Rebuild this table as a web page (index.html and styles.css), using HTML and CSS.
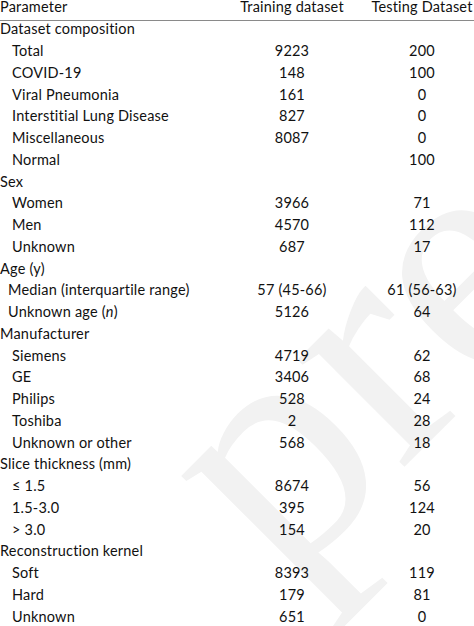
FILE: index.html
```html
<!DOCTYPE html>
<html>
<head>
<meta charset="utf-8">
<link rel="stylesheet" href="styles.css">
</head>
<body>
<div class="page">
  <div class="watermark" aria-hidden="true">preprint</div>
  <div class="table">
    <div class="row head"><span class="lbl top">Parameter</span><span class="num">Training dataset</span><span class="num">Testing Dataset</span></div>
    <div class="body">
      <div class="row"><span class="lbl top">Dataset composition</span><span class="num"></span><span class="num"></span></div>
      <div class="row"><span class="lbl">Total</span><span class="num">9223</span><span class="num">200</span></div>
      <div class="row"><span class="lbl">COVID-19</span><span class="num">148</span><span class="num">100</span></div>
      <div class="row"><span class="lbl">Viral Pneumonia</span><span class="num">161</span><span class="num">0</span></div>
      <div class="row"><span class="lbl">Interstitial Lung Disease</span><span class="num">827</span><span class="num">0</span></div>
      <div class="row"><span class="lbl">Miscellaneous</span><span class="num">8087</span><span class="num">0</span></div>
      <div class="row"><span class="lbl">Normal</span><span class="num"></span><span class="num">100</span></div>
      <div class="row"><span class="lbl top">Sex</span><span class="num"></span><span class="num"></span></div>
      <div class="row"><span class="lbl">Women</span><span class="num">3966</span><span class="num">71</span></div>
      <div class="row"><span class="lbl">Men</span><span class="num">4570</span><span class="num">112</span></div>
      <div class="row"><span class="lbl">Unknown</span><span class="num">687</span><span class="num">17</span></div>
      <div class="row"><span class="lbl top">Age (y)</span><span class="num"></span><span class="num"></span></div>
      <div class="row"><span class="lbl narrow">Median (interquartile range)</span><span class="num">57 (45-66)</span><span class="num">61 (56-63)</span></div>
      <div class="row"><span class="lbl narrow">Unknown age (<i>n</i>)</span><span class="num">5126</span><span class="num">64</span></div>
      <div class="row"><span class="lbl top">Manufacturer</span><span class="num"></span><span class="num"></span></div>
      <div class="row"><span class="lbl">Siemens</span><span class="num">4719</span><span class="num">62</span></div>
      <div class="row"><span class="lbl">GE</span><span class="num">3406</span><span class="num">68</span></div>
      <div class="row"><span class="lbl">Philips</span><span class="num">528</span><span class="num">24</span></div>
      <div class="row"><span class="lbl">Toshiba</span><span class="num">2</span><span class="num">28</span></div>
      <div class="row"><span class="lbl">Unknown or other</span><span class="num">568</span><span class="num">18</span></div>
      <div class="row"><span class="lbl top">Slice thickness (mm)</span><span class="num"></span><span class="num"></span></div>
      <div class="row"><span class="lbl">≤ 1.5</span><span class="num">8674</span><span class="num">56</span></div>
      <div class="row"><span class="lbl">1.5-3.0</span><span class="num">395</span><span class="num">124</span></div>
      <div class="row"><span class="lbl">&gt; 3.0</span><span class="num">154</span><span class="num">20</span></div>
      <div class="row"><span class="lbl top">Reconstruction kernel</span><span class="num"></span><span class="num"></span></div>
      <div class="row"><span class="lbl">Soft</span><span class="num">8393</span><span class="num">119</span></div>
      <div class="row"><span class="lbl">Hard</span><span class="num">179</span><span class="num">81</span></div>
      <div class="row"><span class="lbl">Unknown</span><span class="num">651</span><span class="num">0</span></div>
    </div>
  </div>
</div>
</body>
</html>
```
FILE: styles.css
```css
html, body {
  margin: 0;
  padding: 0;
  background: #fff;
  overflow: hidden;
}
.page {
  position: relative;
  width: 474px;
  height: 626px;
  overflow: hidden;
  font-family: Lato, "Liberation Sans", sans-serif;
  font-size: 14.5px;
  letter-spacing: 0.2px;
  color: #111;
}
.watermark {
  position: absolute;
  left: 284px;
  top: 589px;
  font-family: "Liberation Serif", serif;
  font-size: 330px;
  line-height: 1;
  letter-spacing: 0;
  color: #f2f2f2;
  white-space: nowrap;
  transform-origin: 0 0;
  transform: rotate(-45deg) translateY(-0.84em);
  z-index: 0;
}
.table {
  position: relative;
  z-index: 1;
  width: 487px;
}
.row {
  display: grid;
  grid-template-columns: 227px 130px 130px;
  height: 21.75px;
  line-height: 21.75px;
  white-space: nowrap;
}
.row.head {
  height: 20px;
  line-height: 14.4px;
  border-bottom: 1.6px solid #8a8a8a;
  width: 474px;
}
.body {
  margin-top: -2.6px;
}
.lbl {
  padding-left: 12px;
}
.lbl.narrow {
  padding-left: 8px;
}
.lbl.top {
  padding-left: 0;
}
.num {
  text-align: center;
}
```
